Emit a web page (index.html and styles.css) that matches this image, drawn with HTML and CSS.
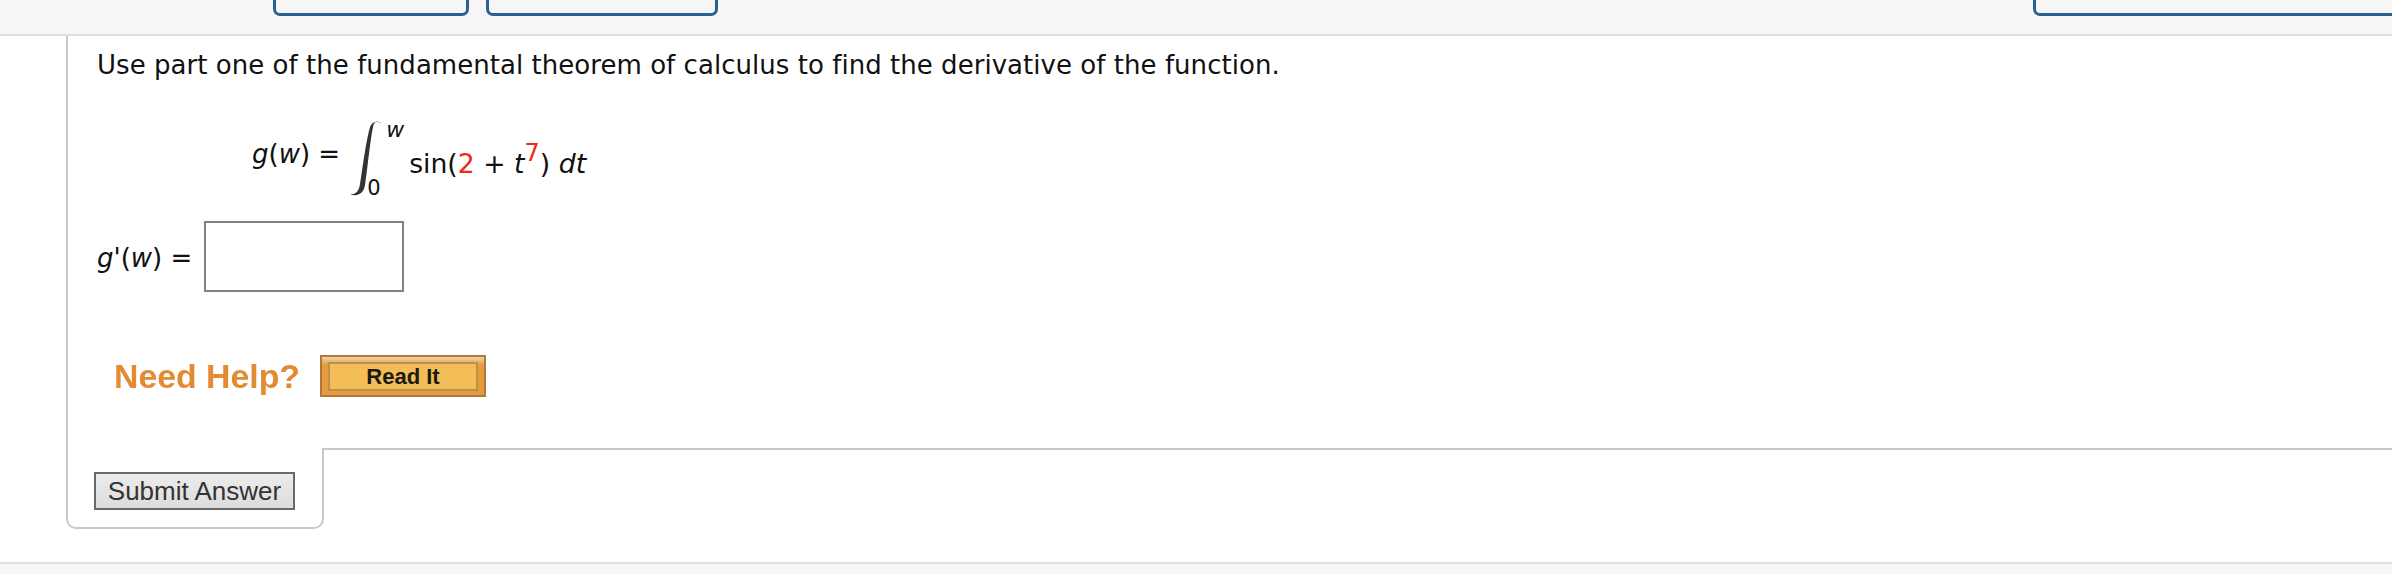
FILE: index.html
```html
<!DOCTYPE html>
<html lang="en">
<head>
<meta charset="utf-8">
<title>Question</title>
<link rel="stylesheet" href="styles.css">
</head>
<body>
<header class="topbar">
  <div class="tab tab-a"></div>
  <div class="tab tab-b"></div>
  <div class="tab tab-c"></div>
</header>
<main class="page">
  <section class="question">
    <p class="prompt">Use part one of the fundamental theorem of calculus to find the derivative of the function.</p>
    <div class="formula">
      <span class="lhs"><i>g</i>(<i>w</i>) =</span>
      <svg class="integral" viewBox="0 0 32 76" aria-hidden="true"><path d="M31 2.5 C27 -0.5 24 0.5 23 6 C20 20 18 44 15 64 C14 71 9 76 1 73.5 L1 73 C6 73.5 9 70 10 63 C13 44 16 20 20 6 C22 0.5 27 -0.5 31 2 Z"/></svg>
      <span class="limits"><i>w</i><span>0</span></span>
      <span class="rhs">sin(<span class="red">2</span> + <i>t</i><sup class="red">7</sup>) <i>dt</i></span>
    </div>
    <div class="answer">
      <span class="answer-label"><i>g'</i>(<i>w</i>) =</span>
      <input class="answer-box" type="text" aria-label="answer">
    </div>
    <div class="help">
      <span class="help-label">Need Help?</span>
      <a class="read-it"><span class="read-it-face">Read It</span></a>
    </div>
  </section>
  <div class="actions">
    <div class="submit-cell"><button class="submit" type="button">Submit Answer</button></div>
    <div class="actions-rest"></div>
  </div>
</main>
<footer class="footer"></footer>
</body>
</html>
```
FILE: styles.css
```css
* { box-sizing: border-box; }
html, body { margin: 0; padding: 0; }
body {
  width: 2392px;
  height: 574px;
  overflow: hidden;
  background: #fff;
  color: #111;
  font-family: "DejaVu Sans", Verdana, sans-serif;
  font-size: 26px;
}
.topbar {
  display: flex;
  gap: 17px;
  height: 36px;
  padding-left: 273px;
  background: #f6f6f6;
  border-bottom: 2px solid #e0e0e0;
  overflow: hidden;
}
.tab {
  flex: none;
  height: 16px;
  border: 3px solid #2b6192;
  border-top: 0;
  border-radius: 0 0 7px 7px;
}
.tab-a { width: 196px; }
.tab-b { width: 232px; }
.tab-c { width: 420px; margin-left: 1298px; }
.page {
  height: 526px;
  padding-left: 66px;
  display: flex;
  flex-direction: column;
}
.question {
  height: 412px;
  border-left: 2px solid #c9c9c9;
  padding-left: 29px;
}
.prompt {
  margin: 0;
  padding-top: 11px;
  line-height: 36px;
  letter-spacing: 0.04px;
}
.formula {
  display: flex;
  align-items: flex-start;
  margin-top: 40px;
  margin-left: 155px;
  height: 74px;
}
.lhs { margin-top: 13px; line-height: 36px; white-space: pre; }
.integral { width: 32px; height: 76px; margin-left: 10px; margin-top: -2px; flex: none; }
.integral path { fill: #333; }
.limits {
  display: flex;
  flex-direction: column;
  justify-content: space-between;
  height: 78px;
  margin-top: -3px;
  margin-left: -15px;
  width: 40px;
  font-size: 21px;
  line-height: 20px;
}
.limits i { margin-left: 19px; font-size: 22px; }
.rhs { margin-top: 23px; margin-left: 2px; font-size: 26.7px; line-height: 36px; white-space: pre; }
.red { color: #ee2a1b; }
.rhs sup { font-size: 24px; line-height: 0; vertical-align: 12px; }
.answer {
  display: flex;
  align-items: center;
  margin-top: 24px;
}
.answer-label { width: 107px; flex: none; white-space: pre; padding-top: 2px; }
.answer-box {
  width: 200px;
  height: 71px;
  border: 2px solid #808080;
  background: #fff;
  padding: 0;
  border-radius: 0;
}
.help {
  display: flex;
  align-items: center;
  margin-top: 63px;
  margin-left: 17px;
}
.help-label {
  font-family: "Liberation Sans", Arial, sans-serif;
  font-weight: 700;
  font-size: 33.8px;
  color: #e28b33;
  width: 206px;
  filter: blur(0.5px);
}
.read-it {
  display: block;
  width: 166px;
  height: 42px;
  padding: 5px 6px 4px;
  border: 2px solid #ab7a3e;
  background: linear-gradient(#f3d3a6 0, #e89b3d 8px);
}
.read-it-face {
  display: flex;
  align-items: center;
  justify-content: center;
  height: 100%;
  background: #f3bd58;
  border: 2px solid #b9914f;
  font-family: "Liberation Sans", Arial, sans-serif;
  font-weight: 700;
  font-size: 22px;
  color: #1c1a10;
}
.actions {
  display: flex;
  height: 81px;
}
.submit-cell {
  width: 258px;
  flex: none;
  border: 2px solid #c9c9c9;
  border-top: 0;
  border-radius: 0 0 10px 10px;
  padding: 24px 0 0 26px;
}
.submit {
  display: block;
  width: 201px;
  height: 38px;
  padding: 0;
  border: 2px solid #6a6a6a;
  border-radius: 0;
  background: linear-gradient(#ececec, #dcdcdc);
  font-family: "Liberation Sans", Arial, sans-serif;
  font-size: 26px;
  color: #333;
}
.actions-rest {
  flex: 1;
  border-top: 2px solid #c9c9c9;
  margin-left: -1px;
}
.footer {
  height: 12px;
  background: #f6f6f6;
  border-top: 2px solid #e0e0e0;
}
```
